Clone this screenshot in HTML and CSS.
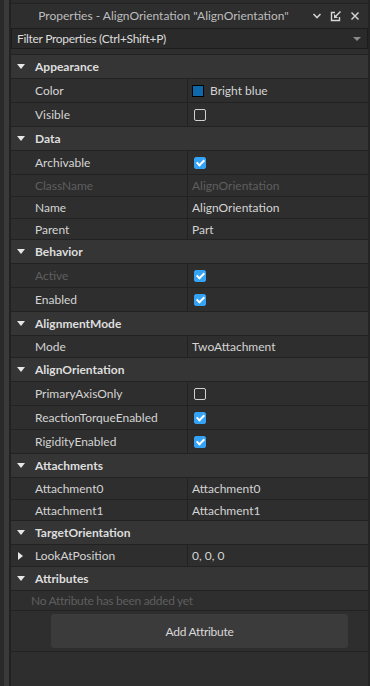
FILE: index.html
```html
<!DOCTYPE html>
<html lang="en">
<head>
    <meta charset="UTF-8">
    <meta name="viewport" content="width=device-width, initial-scale=1.0">
    <title>Properties - AlignOrientation</title>
    <link rel="stylesheet" href="styles.css">
</head>
<body>
    <div class="dock">
        <div class="edge"><div class="edge-bar"></div></div>

        <div class="panel">
            <div class="titlebar">
                <span class="title">Properties - AlignOrientation "AlignOrientation"</span>
                <div class="title-icons">
                    <svg width="10" height="8" viewBox="0 0 10 8"><path d="M1.5 2 L5 5.5 L8.5 2" fill="none" stroke="#d0d0d0" stroke-width="1.6"/></svg>
                    <svg width="12" height="12" viewBox="0 0 12 12"><path d="M5 2.5 H1.5 V10.5 H9.5 V7" fill="none" stroke="#d8d8d8" stroke-width="1.4"/><path d="M10.5 1.5 L5.5 6.5" stroke="#d8d8d8" stroke-width="1.4"/><path d="M4 4 V8 H8 Z" fill="#d8d8d8"/></svg>
                    <svg width="10" height="10" viewBox="0 0 10 10"><path d="M1.5 1.5 L8.5 8.5 M8.5 1.5 L1.5 8.5" stroke="#d0d0d0" stroke-width="1.5"/></svg>
                </div>
            </div>

            <div class="filter">
                <span>Filter Properties (Ctrl+Shift+P)</span>
                <span class="filter-arrow"></span>
            </div>

            <div class="list">
                <div class="group"><span class="caret"></span>Appearance</div>
                <div class="row tall">
                    <div class="name">Color</div>
                    <div class="value"><span class="swatch"></span>Bright blue</div>
                </div>
                <div class="row tall">
                    <div class="name">Visible</div>
                    <div class="value"><span class="check"></span></div>
                </div>

                <div class="group"><span class="caret"></span>Data</div>
                <div class="row tall">
                    <div class="name">Archivable</div>
                    <div class="value"><span class="check on"></span></div>
                </div>
                <div class="row">
                    <div class="name muted">ClassName</div>
                    <div class="value muted">AlignOrientation</div>
                </div>
                <div class="row">
                    <div class="name">Name</div>
                    <div class="value">AlignOrientation</div>
                </div>
                <div class="row short">
                    <div class="name">Parent</div>
                    <div class="value">Part</div>
                </div>

                <div class="group"><span class="caret"></span>Behavior</div>
                <div class="row tall">
                    <div class="name muted">Active</div>
                    <div class="value"><span class="check on"></span></div>
                </div>
                <div class="row tall">
                    <div class="name">Enabled</div>
                    <div class="value"><span class="check on"></span></div>
                </div>

                <div class="group"><span class="caret"></span>AlignmentMode</div>
                <div class="row">
                    <div class="name">Mode</div>
                    <div class="value">TwoAttachment</div>
                </div>

                <div class="group"><span class="caret"></span>AlignOrientation</div>
                <div class="row tall">
                    <div class="name">PrimaryAxisOnly</div>
                    <div class="value"><span class="check"></span></div>
                </div>
                <div class="row tall">
                    <div class="name">ReactionTorqueEnabled</div>
                    <div class="value"><span class="check on"></span></div>
                </div>
                <div class="row tall">
                    <div class="name">RigidityEnabled</div>
                    <div class="value"><span class="check on"></span></div>
                </div>

                <div class="group"><span class="caret"></span>Attachments</div>
                <div class="row">
                    <div class="name">Attachment0</div>
                    <div class="value">Attachment0</div>
                </div>
                <div class="row short">
                    <div class="name">Attachment1</div>
                    <div class="value">Attachment1</div>
                </div>

                <div class="group"><span class="caret"></span>TargetOrientation</div>
                <div class="row">
                    <div class="name"><span class="expand"></span>LookAtPosition</div>
                    <div class="value">0, 0, 0</div>
                </div>

                <div class="group"><span class="caret"></span>Attributes</div>
                <div class="empty">No Attribute has been added yet</div>
                <div class="add-row">
                    <button type="button" class="add-btn">Add Attribute</button>
                </div>
            </div>
        </div>
        <div class="edge-right"></div>
    </div>
</body>
</html>
```

FILE: styles.css
```css
body {
    margin: 0;
    background-color: #2b2b2b;
    font-family: Lato, "Open Sans", sans-serif;
    font-size: 12px;
    color: #d4d4d4;
}
.dock {
    display: flex;
    height: 686px;
}
.edge {
    width: 11px;
    display: flex;
    padding-left: 4px;
    box-sizing: border-box;
    background-color: #2a2a2a;
}
.edge-bar {
    width: 5px;
    background-color: #3a3a3a;
    border-right: 2px solid #222222;
}
.edge-right {
    width: 2px;
    background-color: #242424;
}
.panel {
    flex: 1;
    display: flex;
    flex-direction: column;
    background-color: #2e2e2e;
    padding-top: 3px;
    background-clip: content-box;
    min-width: 0;
}
.titlebar {
    height: 24px;
    display: flex;
    align-items: center;
    border-top: 1px solid #232323;
    background-color: #2e2e2e;
    position: relative;
}
.title {
    flex: 1;
    text-align: center;
    font-size: 12px;
    color: #bdbdbd;
    padding-right: 52px;
    padding-bottom: 1px;
    white-space: nowrap;
}
.title-icons {
    position: absolute;
    right: 8px;
    top: 6px;
    display: flex;
    align-items: center;
    gap: 8px;
}
.filter {
    height: 19px;
    margin: 0 0 5px;
    border: 1px solid #1c1c1c;
    background-color: #2a2a2a;
    display: flex;
    align-items: center;
    padding: 0 6px 0 5px;
    color: #dcdcdc;
    letter-spacing: -0.3px;
    justify-content: space-between;
}
.filter-arrow {
    width: 0;
    height: 0;
    border-left: 4px solid transparent;
    border-right: 4px solid transparent;
    border-top: 4px solid #8a8a8a;
}
.list {
    flex: 1;
    border-top: 1px solid #222222;
}
.group {
    height: 24px;
    display: flex;
    align-items: center;
    background-color: #353535;
    border-bottom: 1px solid #222222;
    box-sizing: border-box;
    font-weight: bold;
    color: #dedede;
}
.caret {
    width: 0;
    height: 0;
    margin: 0 10px 0 6px;
    border-left: 4px solid transparent;
    border-right: 4px solid transparent;
    border-top: 5px solid #e6e6e6;
}
.row {
    height: 22px;
    display: flex;
    border-bottom: 1px solid #222222;
    box-sizing: border-box;
}
.row.tall {
    height: 24px;
}
.row.short {
    height: 21px;
}
.name {
    width: 177px;
    box-sizing: border-box;
    padding-left: 24px;
    border-right: 1px solid #222222;
    display: flex;
    align-items: center;
    position: relative;
    white-space: nowrap;
}
.value {
    flex: 1;
    padding-left: 4px;
    display: flex;
    align-items: center;
    white-space: nowrap;
}
.muted {
    color: #5e5e5e;
}
.swatch {
    width: 10px;
    height: 10px;
    border: 1px solid #000000;
    background-color: #0d69ac;
    margin-right: 6px;
}
.check {
    width: 10px;
    height: 10px;
    margin-left: 2px;
    border: 1px solid #d0d0d0;
    border-radius: 2px;
    position: relative;
}
.check.on {
    border-color: #35a3f5;
    background-color: #35a3f5;
}
.check.on::after {
    content: "";
    position: absolute;
    left: 3px;
    top: 0px;
    width: 3px;
    height: 6px;
    border-right: 2px solid #ffffff;
    border-bottom: 2px solid #ffffff;
    transform: rotate(45deg);
}
.expand {
    position: absolute;
    left: 7px;
    top: 7px;
    width: 0;
    height: 0;
    border-top: 4px solid transparent;
    border-bottom: 4px solid transparent;
    border-left: 5px solid #e6e6e6;
}
.empty {
    height: 20px;
    display: flex;
    align-items: center;
    padding-left: 20px;
    color: #5e5e5e;
    letter-spacing: -0.3px;
    border-bottom: 1px solid #222222;
    box-sizing: border-box;
}
.add-row {
    height: 41px;
    display: flex;
    align-items: center;
    padding-left: 40px;
    padding-right: 20px;
    border-bottom: 1px solid #222222;
    box-sizing: border-box;
}
.add-btn {
    flex: 1;
    height: 34px;
    border: none;
    border-radius: 3px;
    background-color: #3b3b3b;
    color: #d8d8d8;
    font-family: inherit;
    font-size: 12px;
    letter-spacing: -0.3px;
}
```
